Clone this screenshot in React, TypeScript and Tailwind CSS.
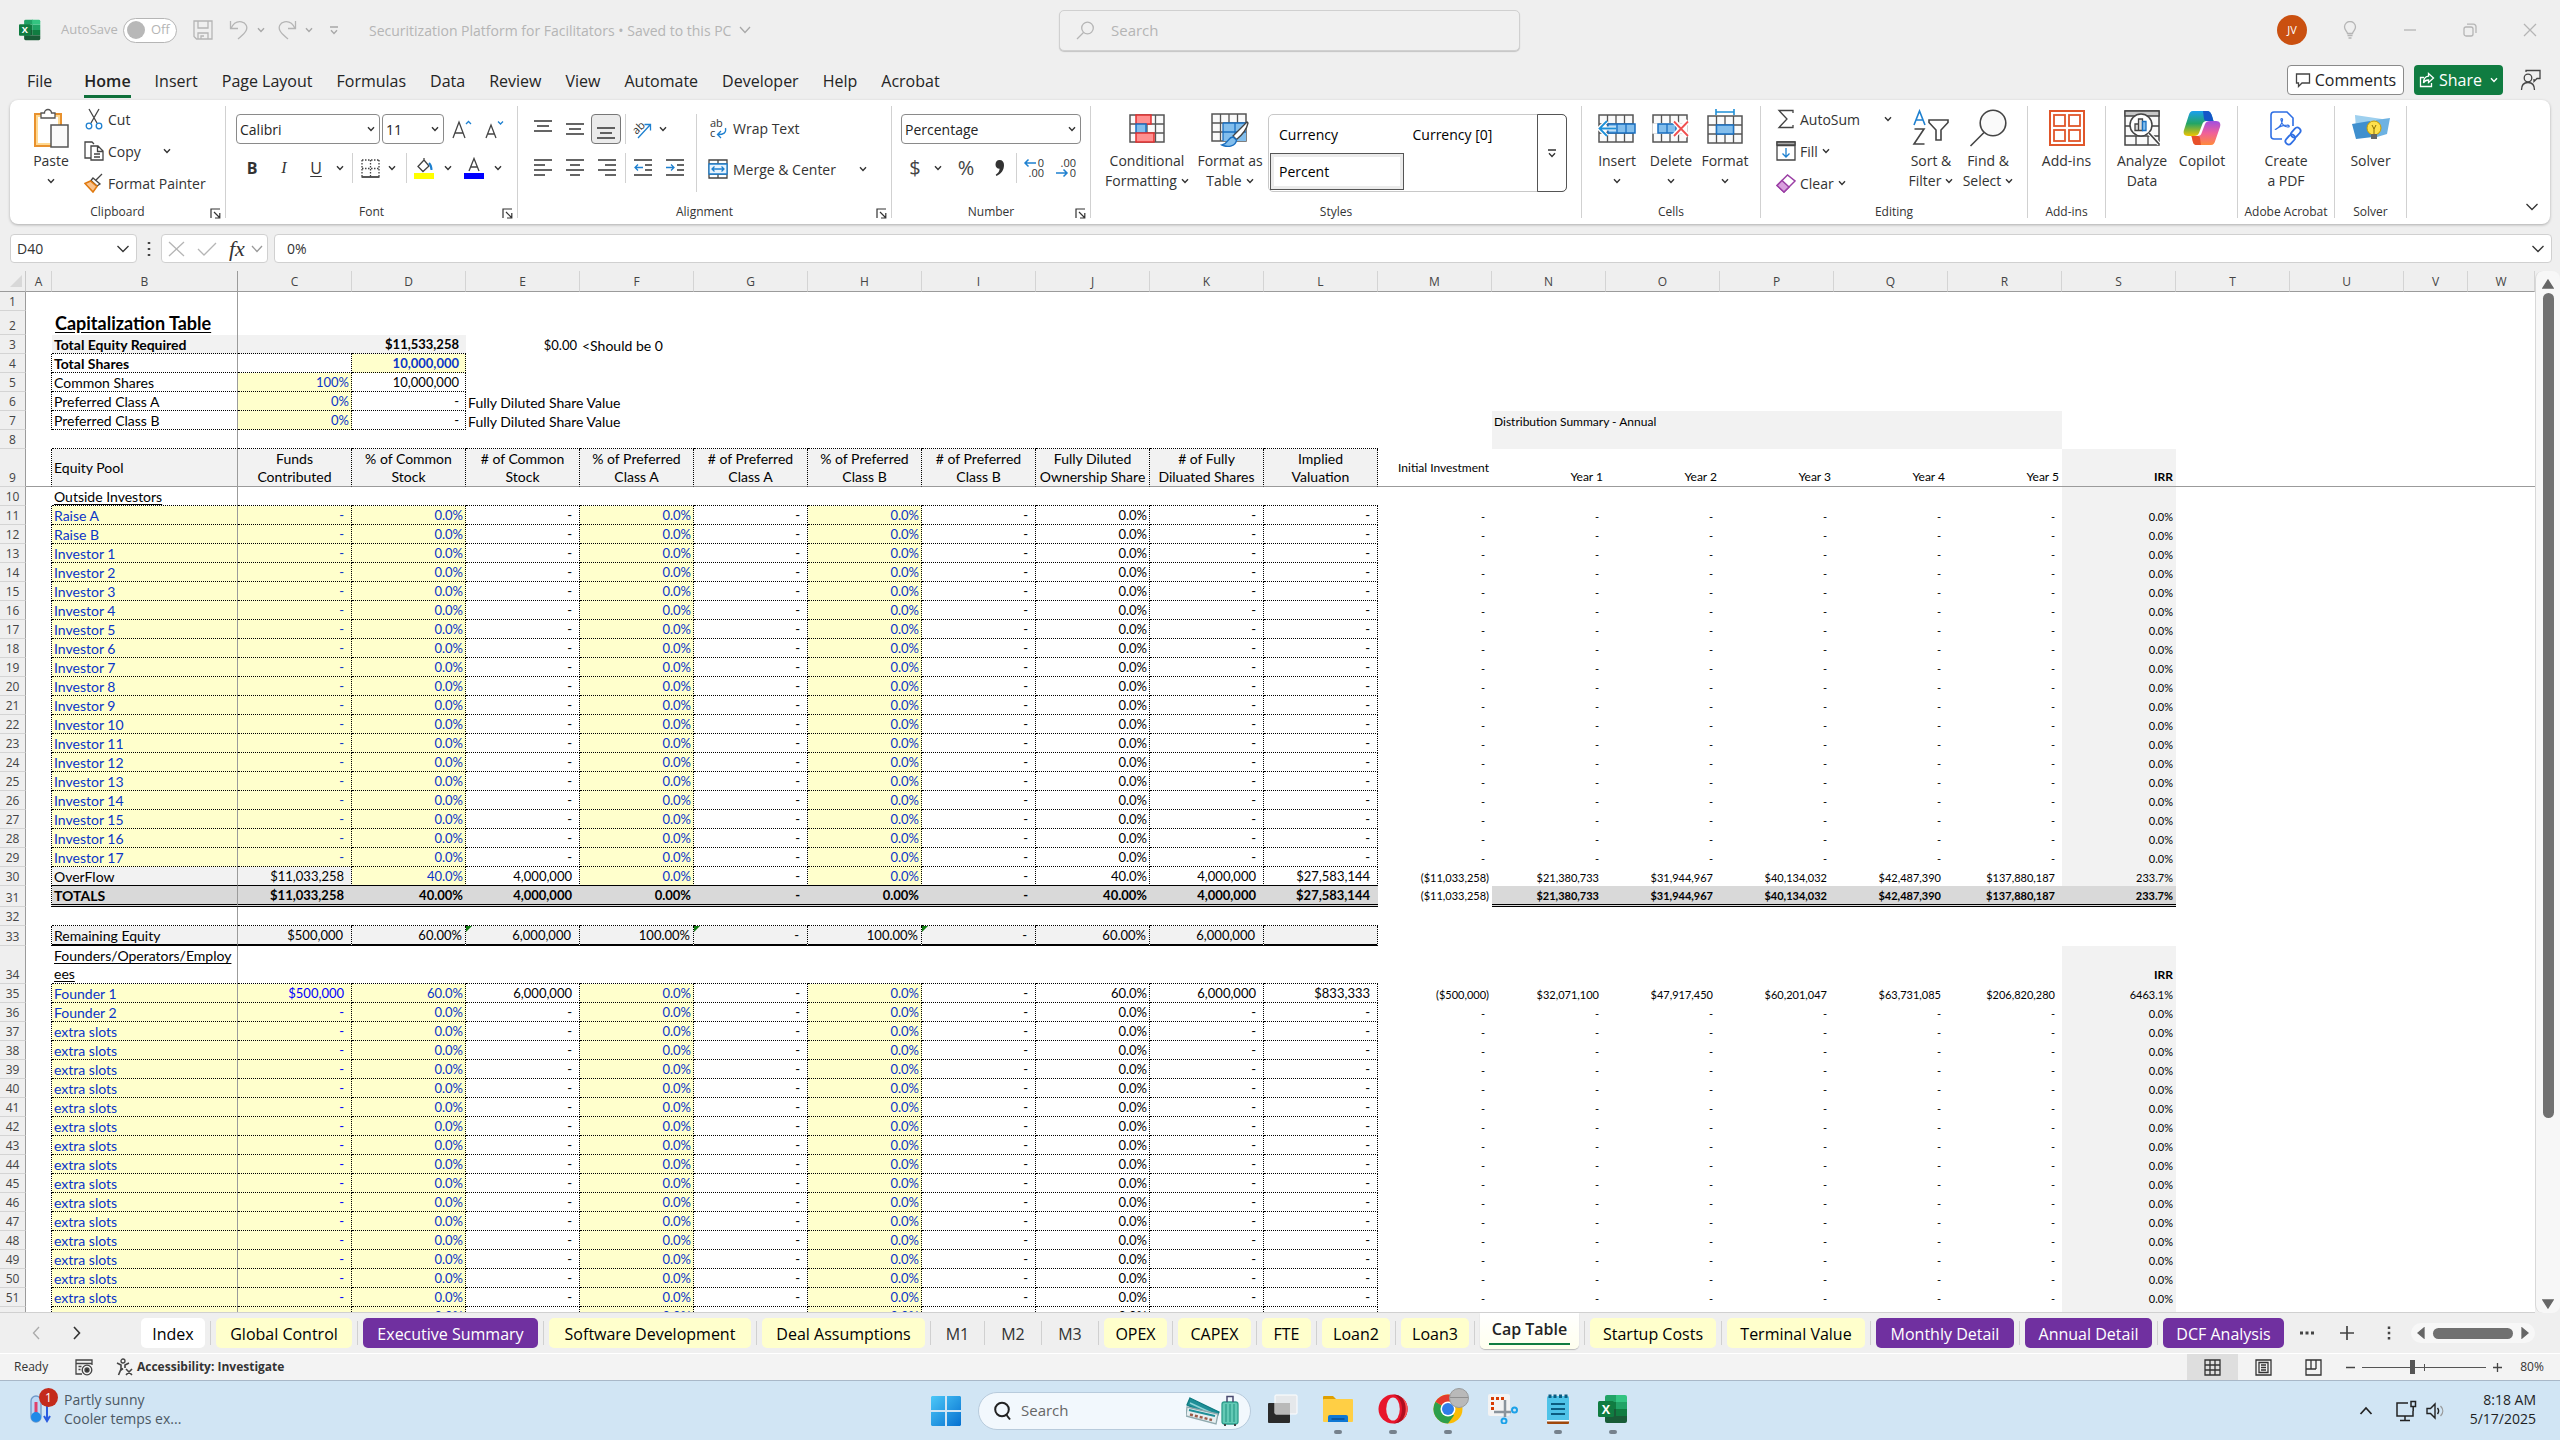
import { ReactNode } from 'react';

interface IconProps {
  children: ReactNode;
  w?: number;
  h?: number;
  box?: string;
  className?: string;
}

interface Cell {
  text?: ReactNode;
  className: string;
  flag?: boolean;
}

interface SheetTab {
  name: string;
  width: string;
  tone: 'white' | 'yellow' | 'purple' | 'plain' | 'active';
}

const Icon = ({ children, w = 20, h = 20, box, className = '' }: IconProps): React.JSX.Element => (
  <svg
    width={w}
    height={h}
    viewBox={box ?? `0 0 ${w} ${h}`}
    fill="none"
    stroke="#444"
    strokeWidth="1.3"
    aria-hidden="true"
    className={`shrink-0 ${className}`}
  >
    {children}
  </svg>
);

const Chevron = ({ className = 'text-[#333]' }: { className?: string }): React.JSX.Element => (
  <Icon w={8} h={6} className={className}>
    <path d="M1 1.2 4 4.4 7 1.2" stroke="currentColor" strokeWidth="1.4" />
  </Icon>
);

const BigChevron = ({ className = 'text-[#333]' }: { className?: string }): React.JSX.Element => (
  <Icon w={14} h={8} className={className}>
    <path d="M1.5 1 7 6.5 12.5 1" stroke="currentColor" />
  </Icon>
);

/* ---------- title bar ---------- */

const ExcelLogo = ({ size }: { size: number }): React.JSX.Element => (
  <svg width={size} height={size} viewBox="0 0 30 30" aria-hidden="true" className="shrink-0">
    <path d="M9 1h10v7H7V3a2 2 0 0 1 2-2z" fill="#21a366" />
    <path d="M18 1h9a2 2 0 0 1 2 2v5H18z" fill="#33c481" />
    <path d="M7 8h11v7H7z" fill="#107c41" />
    <path d="M18 8h11v7H18z" fill="#21a366" />
    <path d="M7 15h11v7H7z" fill="#185c37" />
    <path d="M18 15h11v7H18z" fill="#107c41" />
    <path d="M7 22h22v5a2 2 0 0 1-2 2H9a2 2 0 0 1-2-2z" fill="#185c37" />
    <rect x="0" y="7" width="16" height="16" rx="1.5" fill="#107c41" />
    <text x="8" y="19.5" textAnchor="middle" fontFamily="Open Sans" fontWeight="700" fontSize="12.5" fill="#fff">
      X
    </text>
  </svg>
);

const TitleBar = (): React.JSX.Element => (
  <header className="flex h-[60px] shrink-0 items-center pl-[19px] text-[13px] text-[#b5b5b5]">
    <div className="flex flex-1 items-center pr-[23px]">
      <ExcelLogo size={22} />
      <label htmlFor="autosave" className="ml-5 w-[62px]">
        AutoSave
      </label>
      <button
        id="autosave"
        role="switch"
        aria-checked="false"
        className="flex h-[25px] w-[54px] items-center gap-1.5 rounded-full border border-[#b5b5b5] bg-white pl-[3px]"
      >
        <span className="h-[18px] w-[18px] rounded-full bg-[#b8b8b8]" />
        Off
      </button>
      <button aria-label="Save" className="ml-4">
        <Icon w={20} h={20}>
          <path d="M1 1h18v18H3.5L1 16.5zM5 1v7h10V1M5 19v-6h10v6M8 19v-3h3" stroke="#b5b5b5" />
        </Icon>
      </button>
      <button aria-label="Undo" className="ml-4 flex items-center gap-2 text-[#b5b5b5]">
        <Icon w={20} h={20}>
          <path d="M1.5 1v7.500H9M2 8.500C4 4 8 1 12.500 1.800c4.500 1 6.500 5.200 4.500 9-1.500 3-5 5.500-8 8.200" stroke="#b5b5b5" />
        </Icon>
        <Chevron className="text-[#a8a8a8]" />
      </button>
      <button aria-label="Redo" className="ml-3 flex items-center gap-2 text-[#b5b5b5]">
        <Icon w={20} h={20}>
          <path d="M18.500 1v7.500H11M18 8.500C16 4 12 1 7.500 1.800c-4.500 1-6.500 5.200-4.500 9 1.500 3 5 5.500 8 8.200" stroke="#b5b5b5" />
        </Icon>
        <Chevron className="text-[#a8a8a8]" />
      </button>
      <button aria-label="Customize Quick Access Toolbar" className="ml-4">
        <Icon w={10} h={9}>
          <path d="M1 1h8M2 4.200 5 7.500l3-3.300" stroke="#a8a8a8" />
        </Icon>
      </button>
      <button className="ml-[30px] flex items-center gap-2 text-[14px]">
        Securitization Platform for Facilitators • Saved to this PC
        <Icon w={12} h={8}>
          <path d="M1 1 6 6.500 11 1" stroke="#a8a8a8" />
        </Icon>
      </button>
    </div>
    <div className="flex h-[41px] w-[461px] items-center gap-4 rounded-[5px] border border-[#d0d0d0] bg-[#f0f0f0] pl-4 shadow-[0_1px_1px_#c4c4c4]">
      <Icon w={19} h={19}>
        <circle cx="11.500" cy="7" r="5.800" stroke="#b5b5b5" />
        <path d="M7.500 11.500 1 18" stroke="#b5b5b5" />
      </Icon>
      <input
        aria-label="Search"
        placeholder="Search"
        className="w-80 bg-transparent text-[15px] outline-none placeholder:text-[#b5b5b5]"
      />
    </div>
    <div className="flex flex-1 items-center justify-end pr-[23px]">
      <button className="flex h-[30px] w-[30px] items-center justify-center rounded-full bg-[#ca5010] text-[11px] text-white">
        JV
      </button>
      <button aria-label="Tips" className="ml-[35px]">
        <Icon w={16} h={18}>
          <path d="M5.500 12.500C5 10 2.500 9 2.500 6a5.500 5.500 0 0 1 11 0c0 3-2.500 4-3 6.500zM5.500 14.500h5M6.500 17h3" stroke="#b5b5b5" />
        </Icon>
      </button>
      <button aria-label="Minimize" className="ml-[45px]">
        <Icon w={14} h={14}>
          <path d="M1 7h12" stroke="#b5b5b5" />
        </Icon>
      </button>
      <button aria-label="Restore" className="ml-[46px]">
        <Icon w={14} h={14}>
          <rect x="1" y="4" width="9" height="9" rx="2" stroke="#b5b5b5" />
          <path d="M4 1.200h6.500a2.500 2.500 0 0 1 2.500 2.500V10" stroke="#b5b5b5" />
        </Icon>
      </button>
      <button aria-label="Close" className="ml-[46px]">
        <Icon w={14} h={14}>
          <path d="M1 1l12 12M13 1 1 13" stroke="#b5b5b5" />
        </Icon>
      </button>
    </div>
  </header>
);

/* ---------- ribbon ---------- */

const RIBBON_TABS: string[] = [
  'File',
  'Home',
  'Insert',
  'Page Layout',
  'Formulas',
  'Data',
  'Review',
  'View',
  'Automate',
  'Developer',
  'Help',
  'Acrobat',
];

const RibbonTabs = (): React.JSX.Element => (
  <nav className="flex h-10 shrink-0 items-center pr-[18px] pl-[15px]">
    <div className="flex flex-1 pt-0.5 text-[16px] text-[#242424]">
      {RIBBON_TABS.map(
        (tab: string): React.JSX.Element => (
          <button key={tab} className={tab === 'File' ? 'mr-2 px-3' : 'px-3'}>
            {tab === 'Home' ? (
              <span className="block border-b-[3px] border-[#0f703b] pt-[3px] leading-7 font-semibold">{tab}</span>
            ) : (
              tab
            )}
          </button>
        )
      )}
    </div>
    <button className="flex h-[30px] w-[117px] items-center justify-center gap-1 rounded-[4px] border border-[#8a8a8a] bg-white text-[16px] text-[#242424]">
      <Icon w={16} h={16}>
        <path d="M1.500 2h13v9H7l-3.500 3.500V11h-2z" />
      </Icon>
      Comments
    </button>
    <button className="ml-[10px] flex h-[30px] w-[89px] items-center justify-center gap-1 rounded-[4px] bg-[#107c41] text-[16px] text-white">
      <Icon w={16} h={16}>
        <path d="M5 5.500H1.500v9h11V11M9.500 1.500l5 4.500-5 4.500V8C7 8 5.500 8.800 4.500 11c0-4 2-6.500 5-6.800z" stroke="#fff" />
      </Icon>
      Share
      <Chevron className="ml-1 text-white" />
    </button>
    <button aria-label="Present in Teams" className="ml-[17px]">
      <Icon w={22} h={22}>
        <circle cx="8" cy="9" r="3.800" />
        <path d="M1.500 21c0-5 2.500-7.500 6.500-7.500s6.500 2.500 6.500 7.500M6 3V1.500h14v8h-3l-3 3v-2.500" />
      </Icon>
    </button>
  </nav>
);

interface GroupProps {
  width: string;
  label?: string;
  launcher?: boolean;
  children: ReactNode;
}

const Group = ({ width, label, launcher, children }: GroupProps): React.JSX.Element => (
  <section className={`flex shrink-0 ${width}`}>
    <div className="flex min-w-0 flex-1 flex-col pt-[3px] pb-[5px]">
      <div className="flex min-h-0 flex-1">{children}</div>
      <div className="relative text-center text-[12px] leading-[14px] whitespace-nowrap text-[#333]">
        {label}
        {launcher && (
          <button aria-label={`${label} settings`} className="absolute right-1 bottom-0">
            <Icon w={11} h={11}>
              <path d="M1 10V1h9M4 4l5.500 5.500M9.800 5v5H5" strokeWidth="1.200" stroke="#333" />
            </Icon>
          </button>
        )}
      </div>
    </div>
    <div className="my-1.5 w-px bg-[#d1d1d1]" />
  </section>
);

interface BigButtonProps {
  width: string;
  icon: ReactNode;
  lines: ReactNode[];
}

const BigButton = ({ width, icon, lines }: BigButtonProps): React.JSX.Element => (
  <button className={`flex shrink-0 flex-col items-center pt-[7px] text-[14px] leading-5 text-[#333] ${width}`}>
    <span className="mb-[5px] flex h-9 items-center">{icon}</span>
    {lines.map(
      (line: ReactNode, i: number): React.JSX.Element => (
        <span key={i} className="flex h-5 items-center justify-center gap-1 whitespace-nowrap">
          {line}
        </span>
      )
    )}
  </button>
);

const Slot = ({ width, label, children }: { width: string; label: string; children: ReactNode }): React.JSX.Element => (
  <button aria-label={label} className={`flex h-[30px] shrink-0 items-center justify-center ${width}`}>
    {children}
  </button>
);

const Rule = ({ width }: { width: string }): React.JSX.Element => (
  <span className={`flex h-[30px] shrink-0 justify-center ${width}`}>
    <span className="w-px bg-[#d1d1d1]" />
  </span>
);

const Combo = ({ width, label, value }: { width: string; label: string; value: string }): React.JSX.Element => (
  <span className={`relative flex shrink-0 ${width}`}>
    <select
      aria-label={label}
      defaultValue={value}
      className="h-[30px] w-full appearance-none rounded-[4px] border border-[#8a8a8a] bg-white pl-[3px] text-[14px] text-[#242424]"
    >
      <option>{value}</option>
    </select>
    <span className="pointer-events-none absolute top-3 right-[5px]">
      <Chevron />
    </span>
  </span>
);

const Lines = ({ rows, y }: { rows: [number, number][]; y: number }): React.JSX.Element => (
  <Icon w={18} h={20}>
    <path d={rows.map(([a, b], i): string => `M${a} ${y + i * 5}H${b}`).join('')} stroke="#333" />
  </Icon>
);

const GridBase = (): React.JSX.Element => (
  <>
    <rect x="1" y="5" width="34" height="27" fill="#fafafa" stroke="#555" strokeWidth="1.500" />
    <path d="M1 14h34M1 23h34M9.500 5v27M18 5v27M26.500 5v27" stroke="#555" />
  </>
);

const ConditionalIcon = (): React.JSX.Element => (
  <Icon w={36} h={36}>
    <GridBase />
    <rect x="7" y="5" width="15" height="9" fill="#ff9090" stroke="#e03030" strokeWidth="1.500" />
    <rect x="7" y="14" width="10" height="9" fill="#83beec" stroke="#1a6fc0" strokeWidth="1.500" />
    <rect x="7" y="23" width="18" height="9" fill="#ff9090" stroke="#e03030" strokeWidth="1.500" />
  </Icon>
);

const FormatTableIcon = (): React.JSX.Element => (
  <Icon w={38} h={38}>
    <GridBase />
    <path d="M12 14h23v18H12z" fill="#83beec" stroke="none" />
    <path d="M12 14h23M12 23h23M12 14v18M24 14v18" stroke="#1a6fc0" />
    <path d="M36 13 22 27l3.500 3.500C31 26 36 19 37 14z" fill="#fff" stroke="#444" />
    <path d="M22 28c-5 0-4 6-11 8 6 3 14 1 14.500-5z" fill="#83beec" stroke="#1a6fc0" strokeWidth="1.500" />
  </Icon>
);

const InsertIcon = (): React.JSX.Element => (
  <Icon w={38} h={36}>
    <GridBase />
    <path d="M10 14h27v9H10z" fill="#83beec" stroke="#1a6fc0" strokeWidth="1.500" />
    <path d="M19 14v9M28 14v9" stroke="#1a6fc0" />
    <path d="M18 18.500H1M9 11l-8 7.500L9 26" stroke="#fff" strokeWidth="4" />
    <path d="M18 18.500H1.500M9 11l-7.500 7.500L9 26" stroke="#1e90d8" strokeWidth="1.800" />
  </Icon>
);

const DeleteIcon = (): React.JSX.Element => (
  <Icon w={38} h={36}>
    <GridBase />
    <path d="M1 14h34v9H1z" fill="#fff" stroke="#fff" />
    <path d="M6 14h18v9H6z" fill="#83beec" stroke="#1a6fc0" strokeWidth="1.500" />
    <path d="M15 14v9" stroke="#1a6fc0" />
    <path d="M22 11l14 15M36 11 22 26" stroke="#fff" strokeWidth="5" />
    <path d="M22 11.500l14 14.500M36 11.500 22 26" stroke="#f05050" strokeWidth="1.800" />
  </Icon>
);

const FormatIcon = (): React.JSX.Element => (
  <Icon w={36} h={38}>
    <g transform="translate(0 2)">
      <GridBase />
      <path d="M9.500 14h17v9h-17z" fill="#83beec" stroke="#1a6fc0" strokeWidth="1.500" />
    </g>
    <path d="M9 3h18M9 0v6M27 0v6" stroke="#1e90d8" strokeWidth="1.600" />
  </Icon>
);

const ClipboardGroup = (): React.JSX.Element => (
  <Group width="w-[216px]" label="Clipboard" launcher>
    <BigButton
      width="ml-3 w-[58px]"
      icon={
        <Icon w={36} h={40}>
          <path d="M2 6h26v32H2z" fill="#fff" stroke="#e8912d" strokeWidth="2" />
          <path d="M4 8h22v28H4z" fill="none" stroke="#ffd890" strokeWidth="2" />
          <path d="M8 10V5h3.500a3.500 3.500 0 0 1 7 0H22v5z" fill="#fff" stroke="#555" />
          <path d="M18 17h17v22H18z" fill="#fafafa" stroke="#555" strokeWidth="1.500" />
        </Icon>
      }
      lines={[<>Paste</>, <Chevron />]}
    />
    <div className="ml-1 flex flex-col text-[14px] text-[#333]">
      <button className="flex h-8 items-center gap-1">
        <Icon w={20} h={22}>
          <path d="M5 1l8 14M15 1 7 15" />
          <circle cx="5" cy="18" r="2.800" stroke="#1e80d0" />
          <circle cx="15" cy="18" r="2.800" stroke="#1e80d0" />
        </Icon>
        Cut
      </button>
      <button className="flex h-8 items-center gap-1">
        <Icon w={20} h={20}>
          <path d="M7 17H1V1h7l2 2M7 5h7l5 5v9H7zM13.500 5v5.500H19M10 13h6M10 16h6" />
        </Icon>
        Copy
        <span className="ml-[18px]">
          <Chevron />
        </span>
      </button>
      <button className="flex h-8 items-center gap-1">
        <Icon w={20} h={20}>
          <path d="M18 1l-6 6M9 5l7 6-3 2-6-5.500z" fill="#fff" />
          <path d="M6.500 8 1 10.500 9 19l4-5.500z" fill="#fbc28a" stroke="#e07a10" strokeWidth="1.600" />
        </Icon>
        Format Painter
      </button>
    </div>
  </Group>
);

const FontGroup = (): React.JSX.Element => (
  <Group width="w-[292px]" label="Font" launcher>
    <div className="flex flex-col gap-[9px] pt-[11px] pl-[10px]">
      <div className="flex">
        <Combo width="w-[144px]" label="Font name" value="Calibri" />
        <Combo width="ml-0.5 w-[62px]" label="Font size" value="11" />
        <Slot width="ml-0.5 w-8" label="Increase font size">
          <Icon w={20} h={22}>
            <path d="M1 20 7 4l6 16M3 15h8" />
            <path d="M14 6l2.500-2.500L19 6" stroke="#1e80d0" />
          </Icon>
        </Slot>
        <Slot width="w-8" label="Decrease font size">
          <Icon w={20} h={22}>
            <path d="M2 20 7 7l5 13M4 16h6" />
            <path d="M14 3.500 16.500 6 19 3.500" stroke="#1e80d0" />
          </Icon>
        </Slot>
      </div>
      <div className="flex text-[16px] text-[#333]">
        <Slot width="w-8" label="Bold">
          <b>B</b>
        </Slot>
        <Slot width="w-8" label="Italic">
          <i className="font-['Liberation_Serif',serif]">I</i>
        </Slot>
        <Slot width="w-8" label="Underline">
          <u className="underline-offset-2">U</u>
        </Slot>
        <Slot width="w-4" label="Underline styles">
          <Chevron />
        </Slot>
        <Rule width="w-2" />
        <Slot width="w-7" label="Borders">
          <Icon w={19} h={19}>
            <path d="M1 1h17M1 9.500h17M1 1v17M9.500 1v17M18 1v17" strokeDasharray="1.500 1.500" />
            <path d="M.5 18h18" strokeWidth="1.800" />
          </Icon>
        </Slot>
        <Slot width="w-4" label="Border styles">
          <Chevron />
        </Slot>
        <Rule width="w-3" />
        <Slot width="w-6" label="Fill color">
          <Icon w={20} h={22}>
            <path d="M4 9.500 10 3l5 6-6 5.500zM10 3V1" />
            <path d="M15 6c2 2 2.500 4 2.500 7" stroke="#1e80d0" strokeWidth="2" />
            <path d="M0 16h20v6H0z" fill="#ffff00" stroke="none" />
          </Icon>
        </Slot>
        <Slot width="w-6" label="Fill colors">
          <Chevron />
        </Slot>
        <Slot width="w-7" label="Font color">
          <Icon w={20} h={22}>
            <path d="M5 14 10 1.500 15 14M6.500 10h7" />
            <path d="M0 16h20v6H0z" fill="#0000ff" stroke="none" />
          </Icon>
        </Slot>
        <Slot width="w-5" label="Font colors">
          <Chevron />
        </Slot>
      </div>
    </div>
  </Group>
);

const AlignmentGroup = (): React.JSX.Element => (
  <Group width="w-[374px]" label="Alignment" launcher>
    <div className="flex flex-col gap-[9px] pt-[11px] pl-[9px]">
      <div className="flex">
        <Slot width="w-8" label="Top align">
          <Lines rows={[[0, 18], [3, 15], [0, 18]]} y={2} />
        </Slot>
        <Slot width="w-8" label="Middle align">
          <Lines rows={[[0, 18], [3, 15], [0, 18]]} y={5} />
        </Slot>
        <button
          aria-label="Bottom align"
          className="flex h-[30px] w-[30px] items-center justify-center rounded-[4px] border border-[#777] bg-[#ebebeb]"
        >
          <Lines rows={[[0, 18], [3, 15], [0, 18]]} y={9} />
        </button>
        <Rule width="ml-0.5 w-1" />
        <Slot width="w-7" label="Orientation">
          <Icon w={22} h={22} className="overflow-visible">
            <text x="2" y="14" transform="rotate(-45 8 10)" fontSize="11" fill="#333" stroke="none" fontFamily="Open Sans">
              ab
            </text>
            <path d="M8 20 20 7M14.500 6.500H20.500V12.500" stroke="#1e80d0" />
          </Icon>
        </Slot>
        <Slot width="w-4" label="Orientation options">
          <Chevron />
        </Slot>
      </div>
      <div className="flex">
        <Slot width="w-8" label="Align left">
          <Icon w={18} h={20}>
            <path d="M0 2h18M0 7h11M0 12h18M0 17h11" stroke="#333" />
          </Icon>
        </Slot>
        <Slot width="w-8" label="Center">
          <Icon w={18} h={20}>
            <path d="M0 2h18M4 7h10M0 12h18M4 17h10" stroke="#333" />
          </Icon>
        </Slot>
        <Slot width="w-8" label="Align right">
          <Icon w={18} h={20}>
            <path d="M0 2h18M7 7h11M0 12h18M7 17h11" stroke="#333" />
          </Icon>
        </Slot>
        <Rule width="w-1" />
        <Slot width="w-8" label="Decrease indent">
          <Icon w={18} h={20}>
            <path d="M0 2h18M11 7h7M11 12h7M0 17h18" stroke="#333" />
            <path d="M9 9.500H1M4 6.500 1 9.500l3 3" stroke="#1e80d0" />
          </Icon>
        </Slot>
        <Slot width="w-8" label="Increase indent">
          <Icon w={18} h={20}>
            <path d="M0 2h18M11 7h7M11 12h7M0 17h18" stroke="#333" />
            <path d="M0 9.500h8M5 6.500l3 3-3 3" stroke="#1e80d0" />
          </Icon>
        </Slot>
      </div>
    </div>
    <div className="mt-[11px] ml-[5px] h-[78px] w-px bg-[#d1d1d1]" />
    <div className="flex flex-col gap-[11px] pt-[10px] pl-[11px] text-[14px] text-[#333]">
      <button className="flex h-[30px] items-center gap-[5px]">
        <Icon w={20} h={24} className="overflow-visible">
          <text x="2" y="11" fontSize="11" fill="#333" stroke="none" fontFamily="Open Sans">
            ab
          </text>
          <text x="2" y="21" fontSize="11" fill="#333" stroke="none" fontFamily="Open Sans">
            c
          </text>
          <path d="M17.500 12c1 5-2 6.500-7.500 6.500M13 15l-3.500 3.500L13 22" stroke="#1e80d0" />
        </Icon>
        Wrap Text
      </button>
      <button className="flex h-[30px] items-center gap-[5px]">
        <Icon w={20} h={20}>
          <path d="M1 1h18v18H1zM1 5h18M1 15h18M10 1v4M10 15v4" />
          <path d="M1 5h18v10H1z" fill="#e8f3fc" stroke="#1e80d0" />
          <path d="M4 10h12M6.500 7.500 4 10l2.500 2.500M13.500 7.500 16 10l-2.500 2.500" stroke="#1e80d0" />
        </Icon>
        Merge &amp; Center
        <span className="ml-[18px]">
          <Chevron />
        </span>
      </button>
    </div>
  </Group>
);

const Decimals = ({ top, bottom, arrow }: { top: string; bottom: string; arrow: string }): React.JSX.Element => (
  <Icon w={22} h={24}>
    <text x="21" y="11" textAnchor="end" fontSize="11" fill="#333" stroke="none" fontFamily="Open Sans">
      {top}
    </text>
    <text x="21" y="21" textAnchor="end" fontSize="11" fill="#333" stroke="none" fontFamily="Open Sans">
      {bottom}
    </text>
    <path d={arrow} stroke="#1e80d0" strokeWidth="1.500" />
  </Icon>
);

const NumberGroup = (): React.JSX.Element => (
  <Group width="w-[199px]" label="Number" launcher>
    <div className="flex flex-col gap-[9px] pt-[11px]">
      <Combo width="ml-[9px] w-[180px]" label="Number format" value="Percentage" />
      <div className="flex pl-2 text-[20px] text-[#444]">
        <Slot width="w-[30px]" label="Accounting format">
          $
        </Slot>
        <Slot width="w-4" label="Accounting formats">
          <Chevron />
        </Slot>
        <Slot width="w-10" label="Percent style">
          %
        </Slot>
        <Slot width="w-7" label="Comma style">
          <Icon w={12} h={18}>
            <path d="M5.500 1C8.500 1 10 3 10 6c0 5-2.500 8.500-7.500 11l-.8-1.200C4.500 14 5.500 12 5.600 9.800 3 9.800 1.500 8 1.500 5.500 1.500 2.800 3 1 5.500 1z" fill="#333" stroke="none" />
          </Icon>
        </Slot>
        <Rule width="w-1" />
        <Slot width="w-8" label="Increase decimal">
          <Decimals top="0" bottom=".00" arrow="M13 7H2M5.500 3.500 2 7l3.500 3.500" />
        </Slot>
        <Slot width="w-8" label="Decrease decimal">
          <Decimals top=".00" bottom="0" arrow="M1 17h11M8.500 13.500 12 17l-3.500 3.500" />
        </Slot>
      </div>
    </div>
  </Group>
);

const StylesGroup = (): React.JSX.Element => (
  <Group width="w-[491px]" label="Styles">
    <BigButton
      width="ml-2 w-24"
      icon={<ConditionalIcon />}
      lines={[
        <>Conditional</>,
        <>
          Formatting <Chevron />
        </>,
      ]}
    />
    <BigButton
      width="w-[70px]"
      icon={<FormatTableIcon />}
      lines={[
        <>Format as</>,
        <>
          Table <Chevron />
        </>,
      ]}
    />
    <div className="mt-[11px] ml-[3px] flex h-[78px] w-[299px] rounded-[5px] border border-[#c8c8c8] text-left text-[14px] text-black">
      <div className="grid flex-1 grid-cols-2 grid-rows-2 p-px">
        <button className="pl-[9px] text-left">Currency</button>
        <button className="pl-[9px] text-left">Currency [0]</button>
        <button className="border border-[#555] bg-white pl-2 text-left shadow-[inset_0_0_0_3px_#ebebeb]">Percent</button>
      </div>
      <button
        aria-label="More styles"
        className="-m-px flex w-[30px] items-center justify-center rounded-r-[5px] border border-[#555]"
      >
        <Icon w={10} h={9}>
          <path d="M1 1h8M2 4.200 5 7.500l3-3.300" stroke="#333" />
        </Icon>
      </button>
    </div>
  </Group>
);

const CellsGroup = (): React.JSX.Element => (
  <Group width="w-[179px]" label="Cells">
    <BigButton width="ml-2 w-[54px]" icon={<InsertIcon />} lines={[<>Insert</>, <Chevron />]} />
    <BigButton width="w-[54px]" icon={<DeleteIcon />} lines={[<>Delete</>, <Chevron />]} />
    <BigButton width="w-[54px]" icon={<FormatIcon />} lines={[<>Format</>, <Chevron />]} />
  </Group>
);

const EditingGroup = (): React.JSX.Element => (
  <Group width="w-[267px]" label="Editing">
    <div className="flex w-[142px] flex-col pl-[15px] text-[14px] text-[#333]">
      <button className="flex h-8 items-center gap-1">
        <Icon w={20} h={20}>
          <path d="M17 4V1.500H3l8 8.500-8 8.500h14V16" />
        </Icon>
        AutoSum
        <span className="ml-5">
          <Chevron />
        </span>
      </button>
      <button className="flex h-8 items-center gap-1">
        <Icon w={20} h={20}>
          <path d="M1 1h18v18H1zM1 4.500h18" />
          <path d="M1 1h18v3H1z" fill="#aaa" />
          <path d="M10 7v9M6.500 12.500 10 16l3.500-3.500" stroke="#1e80d0" />
        </Icon>
        Fill <Chevron />
      </button>
      <button className="flex h-8 items-center gap-1">
        <Icon w={20} h={20}>
          <path d="M1 12.500 11.500 2 19 8 8 19z" fill="#fff" stroke="#9b3fa5" strokeWidth="1.500" />
          <path d="M1 12.500 6 7.500l7 6.500-5 5z" fill="#d8a0dd" stroke="#9b3fa5" strokeWidth="1.500" />
        </Icon>
        Clear <Chevron />
      </button>
    </div>
    <BigButton
      width="w-14"
      icon={
        <Icon w={38} h={38}>
          <path d="M2 16 7.500 2 13 16M4 11h7" stroke="#1e80d0" strokeWidth="1.600" />
          <path d="M2.500 20H12L2 35h10.500" strokeWidth="1.600" />
          <path d="M17 11h19v2.500l-7 7.500v10h-5V21l-7-7.500z" fill="#fff" strokeWidth="1.600" />
        </Icon>
      }
      lines={[
        <>Sort &amp;</>,
        <>
          Filter <Chevron />
        </>,
      ]}
    />
    <BigButton
      width="w-[58px]"
      icon={
        <Icon w={38} h={38}>
          <circle cx="24" cy="14" r="12.800" fill="#fafafa" strokeWidth="1.600" />
          <path d="M15 23.500 1.500 37" strokeWidth="1.600" />
        </Icon>
      }
      lines={[
        <>Find &amp;</>,
        <>
          Select <Chevron />
        </>,
      ]}
    />
  </Group>
);

const AddinGroups = (): React.JSX.Element => (
  <>
    <Group width="w-[78px]" label="Add-ins">
      <BigButton
        width="w-[77px]"
        icon={
          <Icon w={36} h={36}>
            <g stroke="#e0562a" strokeWidth="1.800">
              <rect x="1" y="1" width="34" height="34" strokeWidth="2" />
              <rect x="5" y="5" width="11" height="11" />
              <rect x="20" y="5" width="11" height="11" />
              <rect x="5" y="20" width="11" height="11" />
              <rect x="20" y="20" width="11" height="11" />
            </g>
          </Icon>
        }
        lines={[<>Add-ins</>]}
      />
    </Group>
    <Group width="w-[132px]">
      <BigButton
        width="ml-1 w-16"
        icon={
          <Icon w={36} h={36}>
            <rect x="1" y="1" width="34" height="34" fill="#fafafa" strokeWidth="1.500" />
            <path d="M1 1h34v5H1z" fill="#c8c8c8" />
            <path d="M1 16h34M1 26h34M12 26v9M24 26v9" />
            <circle cx="17" cy="15" r="11" fill="#fff" strokeWidth="1.500" />
            <path d="M11 14h3.500v6.500H11zM14.500 9h4v11.500h-4z" fill="#ddd" />
            <path d="M18.500 11.500H22v9h-3.500z" fill="#83beec" stroke="#1a6fc0" />
            <path d="M25 23l10 11" stroke="#fff" strokeWidth="4" />
            <path d="M25 23l10 11" strokeWidth="1.800" />
          </Icon>
        }
        lines={[<>Analyze</>, <>Data</>]}
      />
      <BigButton
        width="w-14"
        icon={
          <svg width="38" height="36" viewBox="0 0 38 36" aria-hidden="true">
            <defs>
              <linearGradient id="cpA" x1="0" y1="0" x2="0" y2="1">
                <stop offset="0" stopColor="#1a9ff0" />
                <stop offset=".5" stopColor="#23a566" />
                <stop offset="1" stopColor="#f0c400" />
              </linearGradient>
              <linearGradient id="cpB" x1="0" y1="0" x2="0" y2="1">
                <stop offset="0" stopColor="#a04fe0" />
                <stop offset=".5" stopColor="#f0609a" />
                <stop offset="1" stopColor="#ff8a3c" />
              </linearGradient>
            </defs>
            <path d="M10 1h14c3 0 4 2 5 5l1.500 5H24c-3 0-4 1-5 4l-3 8c-1 2-2 3-5 3H5c-4 0-5-3-4-6L5.500 6C6.500 2.500 7.500 1 10 1z" fill="url(#cpA)" />
            <path d="M20 1h4c3 0 4 2 5 5l1.500 5H24c-1.500 0-2.500-.5-3-2z" fill="#1456c8" />
            <path d="M28 35H14c-3 0-4-2-4.500-5l-1-4H14c3 0 4-1 5-4l3-8c1-2 2-3 5-3h6c4 0 5 3 4 6l-4.500 13c-1 3.500-2 5-4.500 5z" fill="url(#cpB)" />
            <path d="M18 35h-4c-3 0-4-2-4.500-5l-1-4H14c1.500 0 2.500.5 3 2z" fill="#e8502a" />
          </svg>
        }
        lines={[<>Copilot</>]}
      />
    </Group>
    <Group width="w-[97px]" label="Adobe Acrobat">
      <BigButton
        width="w-24"
        icon={
          <Icon w={32} h={36}>
            <g stroke="#2f6fe4" strokeWidth="1.600">
              <path d="M12 29H4a3 3 0 0 1-3-3V5a3 3 0 0 1 3-3h13l6 6v8" />
              <path d="M6 19c3-1 6-5 6.500-9 .3-2-2-2-1.500 0 .8 4 3.500 7 7 7 2 0 1.500-2-1-1.800-4 .2-7.500 1.300-10 3.300-1.500 1.300-2.500.8-1 .5z" strokeWidth="1.200" />
              <g strokeWidth="1.800">
                <rect x="22.500" y="17" width="6.500" height="11" rx="3.200" transform="rotate(42 25.700 22.500)" />
                <rect x="17" y="24" width="6.500" height="11" rx="3.200" transform="rotate(42 20.200 29.500)" />
              </g>
            </g>
          </Icon>
        }
        lines={[<>Create</>, <>a PDF</>]}
      />
    </Group>
    <Group width="w-[72px]" label="Solver">
      <BigButton
        width="w-[71px]"
        icon={
          <svg width="38" height="36" viewBox="0 0 38 36" aria-hidden="true">
            <path d="M3 5l27 4-2 14-24-4z" fill="#9ed0ef" />
            <path d="M38 8 24 10l1 17 10-3z" fill="#6db2e2" />
            <path d="M0 14 18 11l3 16-17 2z" fill="#3f8fce" />
            <circle cx="22" cy="18" r="7" fill="#ffe14d" stroke="#c79a00" />
            <path d="M20 15l2 4 2-4M22 19v5" stroke="#8a6d00" fill="none" />
            <path d="M19 24h6v5h-6z" fill="#666" />
          </svg>
        }
        lines={[<>Solver</>]}
      />
    </Group>
  </>
);

const Ribbon = (): React.JSX.Element => (
  <div className="mx-[10px] flex h-[124px] shrink-0 rounded-lg bg-white shadow-[0_1px_3px_rgba(0,0,0,0.28)]">
    <ClipboardGroup />
    <FontGroup />
    <AlignmentGroup />
    <NumberGroup />
    <StylesGroup />
    <CellsGroup />
    <EditingGroup />
    <AddinGroups />
    <div className="flex flex-1 items-end justify-end pr-[11px] pb-[13px]">
      <button aria-label="Ribbon display options">
        <BigChevron />
      </button>
    </div>
  </div>
);

const FormulaBar = (): React.JSX.Element => (
  <div className="mt-[10px] mb-2 flex h-[29px] shrink-0 items-center pr-[8px] pl-[10px] text-[14px] text-[#333]">
    <div className="flex h-full w-[127px] items-center rounded-[4px] border border-[#d0d0d0] bg-white pr-1.5 pl-1.5">
      <input aria-label="Name box" defaultValue="D40" className="min-w-0 flex-1 bg-transparent outline-none" />
      <BigChevron />
    </div>
    <Icon w={4} h={16} className="mx-[10px]">
      <path d="M2 1v2M2 7v2M2 13v2" strokeWidth="2.500" />
    </Icon>
    <div className="flex h-full w-[107px] items-center gap-3 rounded-[4px] border border-[#d0d0d0] bg-white pl-1.5">
      <button aria-label="Cancel">
        <Icon w={17} h={16}>
          <path d="M1 1l15 14M16 1 1 15" stroke="#b5b5b5" />
        </Icon>
      </button>
      <button aria-label="Enter">
        <Icon w={20} h={14}>
          <path d="M1 7l6 6L19 1" stroke="#b5b5b5" />
        </Icon>
      </button>
      <button
        aria-label="Insert function"
        className="flex items-center gap-1.5 font-['Liberation_Serif',serif] text-[22px] leading-5 italic"
      >
        fx
        <Icon w={12} h={8}>
          <path d="M1 1l5 5.500L11 1" stroke="#999" />
        </Icon>
      </button>
    </div>
    <div className="ml-1.5 flex h-full flex-1 items-center rounded-[4px] border border-[#d0d0d0] bg-white pr-1.5 pl-3">
      <input aria-label="Formula bar" defaultValue="0%" className="min-w-0 flex-1 bg-transparent outline-none" />
      <BigChevron />
    </div>
  </div>
);

/* ---------- worksheet ---------- */

const COLUMNS: string[] = 'ABCDEFGHIJKLMNOPQRSTUVW'.split('');
const POOL_COLUMNS: string[] = 'CDEFGHIJKL'.split('');
const YEAR_COLUMNS: string[] = 'NOPQR'.split('');

const COLUMN_WIDTHS: Record<string, string> = {
  A: 'w-[26px]',
  B: 'w-[186px]',
  V: 'w-[64px]',
  W: 'w-[67px]',
};

const ROW_HEIGHTS: Record<number, string> = {
  2: 'h-6',
  9: 'h-[38px]',
  31: 'h-[21px]',
  33: 'h-5',
  34: 'h-[38px]',
};

const R_DOT = 'border-r [border-right-style:dotted] border-r-black';
const B_DOT = 'border-b [border-bottom-style:dotted] border-b-black';
const B_SOLID = 'border-b border-b-black';
const B_THICK = 'border-b-2 border-b-black';
const B_DOUBLE = 'border-b-3 [border-bottom-style:double] border-b-black';
const B_FREEZE = 'border-b border-b-[#9b9b9b]';
const R_FREEZE = 'border-r border-r-[#9b9b9b]';

const WORDS = 'text-[14px] text-black';
const NUMBERS = 'text-[13px] text-black';
const BLUE = 'text-[#0a35c8]';
const SMALL = 'text-[11px] text-black';
const SMALL_WORDS = 'text-[12px] text-black';
const YELLOW = 'bg-[#ffffcc]';
const GRAY = 'bg-[#f2f2f2]';
const DARK = 'bg-[#d9d9d9]';

const HEADINGS: Record<string, [string, string]> = {
  C: ['Funds', 'Contributed'],
  D: ['% of Common', 'Stock'],
  E: ['# of Common', 'Stock'],
  F: ['% of Preferred', 'Class A'],
  G: ['# of Preferred', 'Class A'],
  H: ['% of Preferred', 'Class B'],
  I: ['# of Preferred', 'Class B'],
  J: ['Fully Diluted', 'Ownership Share'],
  K: ['# of Fully', 'Diluated Shares'],
  L: ['Implied', 'Valuation'],
};

const VALUES: Record<number, Record<string, string>> = {
  30: {
    C: '$11,033,258', D: '40.0%', E: '4,000,000', J: '40.0%', K: '4,000,000', L: '$27,583,144', M: '($11,033,258)',
    N: '$21,380,733', O: '$31,944,967', P: '$40,134,032', Q: '$42,487,390', R: '$137,880,187', S: '233.7%',
  },
  31: {
    C: '$11,033,258', D: '40.00%', E: '4,000,000', F: '0.00%', G: '-', H: '0.00%', I: '-', J: '40.00%',
    K: '4,000,000', L: '$27,583,144', M: '($11,033,258)', N: '$21,380,733', O: '$31,944,967', P: '$40,134,032',
    Q: '$42,487,390', R: '$137,880,187', S: '233.7%',
  },
  33: {
    C: '$500,000', D: '60.00%', E: '6,000,000', F: '100.00%', G: '-', H: '100.00%', I: '-', J: '60.00%',
    K: '6,000,000', L: '',
  },
  35: {
    C: '$500,000', D: '60.0%', E: '6,000,000', J: '60.0%', K: '6,000,000', L: '$833,333', M: '($500,000)',
    N: '$32,071,100', O: '$47,917,450', P: '$60,201,047', Q: '$63,731,085', R: '$206,820,280', S: '6463.1%',
  },
};

const isPercent = (col: string): boolean => 'DFHJS'.includes(col);

const valueAt = (row: number, col: string): string => VALUES[row]?.[col] ?? (isPercent(col) ? '0.0%' : '-');

const nameAt = (row: number): string => {
  if (row <= 12) return row === 11 ? 'Raise A' : 'Raise B';
  if (row <= 29) return `Investor ${row - 12}`;
  if (row === 30) return 'OverFlow';
  return row <= 36 ? `Founder ${row - 34}` : 'extra slots';
};

const poolRow = (row: number): Record<string, Cell> => {
  const line: string = row === 30 ? B_SOLID : B_DOT;
  const cells: Record<string, Cell> = {
    A: { className: R_DOT },
    B: {
      text: nameAt(row),
      className: `${line} pl-0.5 ${row === 30 ? `${WORDS} ${GRAY}` : `text-[14px] ${BLUE} ${YELLOW}`}`,
    },
  };
  POOL_COLUMNS.forEach((col: string): void => {
    let tone: string = NUMBERS;
    if ('CDFH'.includes(col)) tone = `text-[13px] ${BLUE} ${YELLOW}`;
    if (col === 'C' && row === 30) tone = `${NUMBERS} ${GRAY}`;
    if (col === 'C' && row > 34) tone = `text-[13px] text-[#0000ff] ${YELLOW}`;
    cells[col] = {
      text: valueAt(row, col),
      className: `${tone} ${line} ${R_DOT} text-right ${isPercent(col) ? 'pr-0.5' : 'pr-[7px]'}`,
    };
  });
  ['M', ...YEAR_COLUMNS].forEach((col: string): void => {
    const text: string = valueAt(row, col);
    cells[col] = { text, className: `${SMALL} text-right ${text.startsWith('(') ? 'pr-[3px]' : 'pr-[7px]'}` };
  });
  cells.S = { text: valueAt(row, 'S'), className: `${SMALL} ${GRAY} pr-[3px] text-right` };
  return cells;
};

const headingRow = (): Record<string, Cell> => {
  const cells: Record<string, Cell> = {
    A: { className: `${B_FREEZE} ${R_DOT}` },
    B: { text: 'Equity Pool', className: `${WORDS} ${GRAY} ${B_FREEZE} pl-0.5` },
    M: { text: 'Initial Investment', className: `${SMALL_WORDS} ${B_FREEZE} pr-[3px] text-right` },
    S: { text: 'IRR', className: `${SMALL_WORDS} ${GRAY} ${B_FREEZE} pr-[3px] text-right font-bold` },
  };
  POOL_COLUMNS.forEach((col: string): void => {
    const [first, second] = HEADINGS[col];
    cells[col] = {
      text: (
        <>
          {first}
          <br />
          {second}
        </>
      ),
      className: `${WORDS} ${GRAY} ${B_FREEZE} ${R_DOT} px-0 text-center`,
    };
  });
  YEAR_COLUMNS.forEach((col: string, i: number): void => {
    cells[col] = { text: `Year ${i + 1}`, className: `${SMALL_WORDS} ${B_FREEZE} pr-[3px] text-right` };
  });
  'TUVW'.split('').forEach((col: string): void => {
    cells[col] = { className: B_FREEZE };
  });
  return cells;
};

const totalsRow = (row: number): Record<string, Cell> => {
  const isTotals: boolean = row === 31;
  const base: string = isTotals ? `font-bold text-black ${DARK} ${B_DOUBLE}` : `text-black ${GRAY} ${B_THICK}`;
  const cells: Record<string, Cell> = {
    A: { className: R_DOT },
    B: { text: isTotals ? 'TOTALS' : 'Remaining Equity', className: `text-[14px] ${base} pl-0.5` },
  };
  POOL_COLUMNS.forEach((col: string): void => {
    cells[col] = {
      text: valueAt(row, col),
      className: `text-[13px] ${base} ${isTotals ? '' : R_DOT} text-right ${isPercent(col) ? 'pr-[3px]' : 'pr-2'}`,
      flag: !isTotals && 'EGI'.includes(col),
    };
  });
  if (isTotals) {
    cells.M = { text: valueAt(row, 'M'), className: `${SMALL} pr-[3px] pb-[3px] text-right` };
    YEAR_COLUMNS.forEach((col: string): void => {
      cells[col] = {
        text: valueAt(row, col),
        className: `${SMALL} ${DARK} ${B_DOUBLE} pr-[7px] text-right font-bold`,
      };
    });
    cells.S = { text: valueAt(row, 'S'), className: `${SMALL} ${DARK} ${B_DOUBLE} pr-[3px] text-right font-bold` };
  }
  return cells;
};

const bottomLine = (): Record<string, Cell> =>
  Object.fromEntries(['B', ...POOL_COLUMNS].map((col: string): [string, Cell] => [col, { className: B_DOT }]));

const cellsFor = (row: number): Record<string, Cell> => {
  const label = (text: string, c: string, d: string, cTone: string, dTone: string): Record<string, Cell> => ({
    A: { className: R_DOT },
    B: { text, className: `${WORDS} ${row === 4 ? 'font-bold' : ''} ${B_DOT} pl-0.5` },
    C: { text: c, className: `text-[13px] ${cTone} ${B_DOT} ${R_DOT} pr-0.5 text-right` },
    D: { text: d, className: `text-[13px] ${dTone} ${B_DOT} ${R_DOT} pr-1.5 text-right` },
  });
  switch (row) {
    case 2:
      return {
        B: {
          text: <u className="underline-offset-2">Capitalization Table</u>,
          className: 'pb-[3px] pl-[3px] text-[18px] font-bold text-black',
        },
      };
    case 3:
      return {
        B: { text: 'Total Equity Required', className: `${WORDS} ${GRAY} ${B_DOT} pl-0.5 font-bold` },
        C: { className: `${GRAY} ${B_DOT}` },
        D: { text: '$11,533,258', className: `${NUMBERS} ${GRAY} ${B_DOT} pr-[7px] text-right font-bold` },
        E: { text: '$0.00', className: `${NUMBERS} pr-[3px] text-right` },
        F: { text: '<Should be 0', className: `${WORDS} pl-0.5` },
      };
    case 4:
      return label('Total Shares', '', '10,000,000', '', `font-bold ${BLUE} ${YELLOW}`);
    case 5:
      return label('Common Shares', '100%', '10,000,000', `${BLUE} ${YELLOW}`, 'text-black');
    case 6:
    case 7: {
      const cells = label(`Preferred Class ${row === 6 ? 'A' : 'B'}`, '0%', '-', `${BLUE} ${YELLOW}`, 'text-black');
      cells.E = { text: 'Fully Diluted Share Value', className: `${WORDS} pl-0.5` };
      if (row === 7) {
        YEAR_COLUMNS.forEach((col: string): void => {
          cells[col] = {
            text: col === 'N' ? 'Distribution Summary - Annual' : '',
            className: `${SMALL_WORDS} ${GRAY} pl-0.5`,
          };
        });
      }
      return cells;
    }
    case 8: {
      const cells = bottomLine();
      YEAR_COLUMNS.forEach((col: string): void => {
        cells[col] = { className: GRAY };
      });
      return cells;
    }
    case 9:
      return headingRow();
    case 10: {
      const cells = bottomLine();
      cells.B = { text: <u className="underline-offset-2">Outside Investors</u>, className: `${WORDS} ${B_DOT} pl-0.5` };
      cells.S = { className: GRAY };
      return cells;
    }
    case 31:
    case 33:
      return totalsRow(row);
    case 32:
      return bottomLine();
    case 34: {
      const cells = bottomLine();
      cells.B = {
        text: (
          <u className="underline-offset-2">
            Founders/Operators/Employ
            <br />
            ees
          </u>
        ),
        className: `${WORDS} ${B_DOT} pl-0.5`,
      };
      cells.S = { text: 'IRR', className: `${SMALL_WORDS} ${GRAY} pr-[3px] text-right font-bold` };
      return cells;
    }
    default:
      return row > 10 ? poolRow(row) : {};
  }
};

const MIDDLE_CELLS: string[] = ['B9', 'M9'];

const leadingFor = (row: number): string =>
  row === 9 || row === 34 ? 'pt-px leading-[18px]' : 'pt-px leading-[17px]';

const Worksheet = (): React.JSX.Element => (
  <div className="flex min-h-0 flex-1">
    <div className="min-w-0 flex-1 overflow-hidden border-b border-[#d0d0d0] bg-white">
      <table className="w-[2535px] table-fixed border-separate border-spacing-0 font-['Lato',sans-serif]">
        <colgroup>
          <col className="w-[26px]" />
          {COLUMNS.map(
            (col: string): React.JSX.Element => (
              <col key={col} className={COLUMN_WIDTHS[col] ?? 'w-[114px]'} />
            )
          )}
        </colgroup>
        <thead className="bg-[#efefef] font-['Open_Sans',sans-serif] text-[12px] text-[#444]">
          <tr className="h-[21px]">
            <th aria-label="Select all" className="border-r border-b border-r-[#c8c8c8] border-b-[#9b9b9b] p-0">
              <Icon w={12} h={12} className="ml-[10px]">
                <path d="M12 0v12H0z" fill="#d8d8d8" stroke="none" />
              </Icon>
            </th>
            {COLUMNS.map(
              (col: string): React.JSX.Element => (
                <th
                  key={col}
                  scope="col"
                  className={`border-r border-b border-b-[#9b9b9b] p-0 pt-0.5 leading-[18px] font-normal ${col === 'B' ? 'border-r-[#9b9b9b]' : 'border-r-[#d4d4d4]'}`}
                >
                  {col}
                </th>
              )
            )}
          </tr>
        </thead>
        <tbody>
          {Array.from({ length: 52 }, (_, i): number => i + 1).map((row: number): React.JSX.Element => {
            const cells: Record<string, Cell> = cellsFor(row);
            return (
              <tr key={row} className={ROW_HEIGHTS[row] ?? 'h-[19px]'}>
                <th
                  scope="row"
                  className="border-r border-b border-r-[#9b9b9b] border-b-[#d4d4d4] bg-[#efefef] p-0 pt-0.5 align-bottom font-['Open_Sans',sans-serif] text-[12px] leading-4 font-normal text-[#444]"
                >
                  {row}
                </th>
                {COLUMNS.map((col: string): React.JSX.Element => {
                  const cell: Cell | undefined = cells[col];
                  const align: string = MIDDLE_CELLS.includes(`${col}${row}`) ? 'align-middle' : 'align-bottom';
                  return (
                    <td
                      key={col}
                      className={`whitespace-nowrap ${leadingFor(row)} ${align} ${col === 'B' ? R_FREEZE : ''} ${cell?.className ?? ''} ${cell?.flag ? 'relative' : ''}`}
                    >
                      {cell?.flag && (
                        <span className="absolute top-0 left-0 border-t-6 border-r-6 border-t-[#107c10] border-r-transparent" />
                      )}
                      {cell?.text}
                    </td>
                  );
                })}
              </tr>
            );
          })}
        </tbody>
      </table>
    </div>
    <div className="flex w-[25px] shrink-0 flex-col items-center rounded-lg border-l border-[#d8d8d8] bg-[#f7f7f7] pt-2 pb-1">
      <Icon w={12} h={10}>
        <path d="M6 1l5 8H1z" fill="#666" stroke="#666" />
      </Icon>
      <div className="mt-1 flex w-[11px] flex-1">
        <div className="h-[82%] w-full rounded-full bg-[#707070]" />
      </div>
      <Icon w={12} h={10}>
        <path d="M6 9l5-8H1z" fill="#666" stroke="#666" />
      </Icon>
    </div>
  </div>
);

/* ---------- sheet tabs and status bar ---------- */

const SHEET_TABS: SheetTab[] = [
  { name: 'Index', width: 'w-16', tone: 'white' },
  { name: 'Global Control', width: 'w-[136px]', tone: 'yellow' },
  { name: 'Executive Summary', width: 'w-[175px]', tone: 'purple' },
  { name: 'Software Development', width: 'w-[202px]', tone: 'yellow' },
  { name: 'Deal Assumptions', width: 'w-[163px]', tone: 'yellow' },
  { name: 'M1', width: 'w-[43px]', tone: 'plain' },
  { name: 'M2', width: 'w-[46px]', tone: 'plain' },
  { name: 'M3', width: 'w-[46px]', tone: 'plain' },
  { name: 'OPEX', width: 'w-[63px]', tone: 'yellow' },
  { name: 'CAPEX', width: 'w-[73px]', tone: 'yellow' },
  { name: 'FTE', width: 'w-[49px]', tone: 'yellow' },
  { name: 'Loan2', width: 'w-[68px]', tone: 'yellow' },
  { name: 'Loan3', width: 'w-[68px]', tone: 'yellow' },
  { name: 'Cap Table', width: 'w-[99px]', tone: 'active' },
  { name: 'Startup Costs', width: 'w-[126px]', tone: 'yellow' },
  { name: 'Terminal Value', width: 'w-[138px]', tone: 'yellow' },
  { name: 'Monthly Detail', width: 'w-[138px]', tone: 'purple' },
  { name: 'Annual Detail', width: 'w-[127px]', tone: 'purple' },
  { name: 'DCF Analysis', width: 'w-[121px]', tone: 'purple' },
];

const TONES: Record<SheetTab['tone'], string> = {
  white: 'h-[30px] rounded-[5px] bg-white pt-px text-black',
  yellow: 'h-[30px] rounded-[5px] bg-[#ffffcc] pt-px text-black',
  purple: 'h-[30px] rounded-[5px] bg-[#7030a0] pt-px text-white',
  plain: 'h-[30px] pt-px text-[#333]',
  active:
    'h-[36px] self-start rounded-b-[5px] bg-linear-to-b from-white to-[#ffffee] pb-0.5 font-semibold text-[#242424] shadow-[0_1px_1px_#bbb]',
};

const SheetTabs = (): React.JSX.Element => (
  <div className="flex h-10 shrink-0 items-center text-[16px]">
    <div className="flex w-[141px] shrink-0 items-center gap-[33px] pl-[32px]">
      <button aria-label="Previous sheet">
        <Icon w={8} h={14}>
          <path d="M7 1 1.500 7 7 13" stroke="#aaa" />
        </Icon>
      </button>
      <button aria-label="Next sheet">
        <Icon w={8} h={14}>
          <path d="M1 1l5.500 6L1 13" stroke="#333" strokeWidth="1.600" />
        </Icon>
      </button>
    </div>
    {SHEET_TABS.map(
      (tab: SheetTab, i: number): React.JSX.Element => (
        <div key={tab.name} className="flex h-full shrink-0 items-center">
          {i > 0 && <span className="mx-[5px] h-6 w-px bg-[#d0d0d0]" />}
          <button className={`whitespace-nowrap ${tab.width} ${TONES[tab.tone]}`}>
            {tab.tone === 'active' ? (
              <span className="mx-[9px] block border-b-2 border-[#107c41] leading-7">{tab.name}</span>
            ) : (
              tab.name
            )}
          </button>
        </div>
      )
    )}
    <div className="flex flex-1 items-center justify-end pr-[25px]">
      <button aria-label="All sheets" className="mr-6">
        <Icon w={16} h={4}>
          <path d="M1 2h3M6.500 2h3M12 2h3" strokeWidth="3" />
        </Icon>
      </button>
      <button aria-label="New sheet" className="mr-8">
        <Icon w={16} h={16}>
          <path d="M8 1v14M1 8h14" strokeWidth="1.700" />
        </Icon>
      </button>
      <Icon w={4} h={14} className="mr-5">
        <path d="M2 .5v2.500M2 5.800v2.500M2 11v2.500" strokeWidth="2.500" />
      </Icon>
      <div className="flex h-[20px] w-[124px] items-center justify-between rounded-full bg-[#f7f7f7] px-1.5">
        <Icon w={8} h={12}>
          <path d="M7 1v10L1 6z" fill="#666" stroke="#666" />
        </Icon>
        <span className="h-[11px] w-20 rounded-full bg-[#707070]" />
        <Icon w={8} h={12}>
          <path d="M1 1v10l6-5z" fill="#666" stroke="#666" />
        </Icon>
      </div>
    </div>
  </div>
);

const StatusBar = (): React.JSX.Element => (
  <footer className="flex h-[27px] shrink-0 items-center border-t border-white bg-[#f3f3f3] text-[12px] text-[#333]">
    <span className="w-[75px] pl-[14px]">Ready</span>
    <button aria-label="Record macro" className="w-10">
      <Icon w={18} h={17}>
        <path d="M7 15H1V1h16v5M1 4.500h16M3.500 7.500h3M3.500 10.500h2" />
        <circle cx="12" cy="11" r="4.800" />
        <circle cx="12" cy="11" r="2" fill="#333" />
      </Icon>
    </button>
    <button className="flex items-center gap-1 font-bold">
      <Icon w={18} h={18}>
        <circle cx="8" cy="3" r="2" />
        <path d="M2 5l4 2v4l-2.500 6M14 5l-4 2v3M6 12l2-1.500M11 11l6 6M17 11l-6 6" strokeWidth="1.600" />
      </Icon>
      Accessibility: Investigate
    </button>
    <div className="flex h-full flex-1 items-center justify-end pr-[15px]">
      <button aria-label="Normal view" className="flex h-full w-[51px] items-center justify-center bg-[#dedede]">
        <Icon w={17} h={17}>
          <path d="M1 1h15v15H1zM1 6h15M1 11h15M6 1v15M11 1v15" stroke="#333" />
        </Icon>
      </button>
      <button aria-label="Page layout view" className="flex w-[50px] justify-center">
        <Icon w={17} h={17}>
          <path d="M1 1h15v15H1zM4 3.500h9v10H4zM6 6h5M6 8.500h5M6 11h5" stroke="#333" />
        </Icon>
      </button>
      <button aria-label="Page break view" className="flex w-[50px] justify-center">
        <Icon w={17} h={17}>
          <path d="M1 1h15v15H1zM6 1v9M11 1v9M1 10h10" stroke="#333" />
        </Icon>
      </button>
      <button aria-label="Zoom out" className="ml-[7px]">
        <Icon w={11} h={11}>
          <path d="M1 5.500h9" strokeWidth="1.500" />
        </Icon>
      </button>
      <span className="relative mx-1.5 flex w-[124px] items-center">
        <input
          type="range"
          aria-label="Zoom"
          min="0"
          max="100"
          defaultValue="40"
          className="h-px w-full appearance-none bg-[#555] [&::-webkit-slider-thumb]:h-[14px] [&::-webkit-slider-thumb]:w-[5px] [&::-webkit-slider-thumb]:appearance-none [&::-webkit-slider-thumb]:bg-[#555]"
        />
        <span className="absolute left-1/2 h-[7px] w-px bg-[#555]" />
      </span>
      <button aria-label="Zoom in">
        <Icon w={11} h={11}>
          <path d="M1 5.500h9M5.500 1v9" strokeWidth="1.300" />
        </Icon>
      </button>
      <button className="ml-4 w-[26px] text-[12px] whitespace-nowrap">80%</button>
    </div>
  </footer>
);

/* ---------- taskbar ---------- */

interface AppIcon {
  name: string;
  running: boolean;
  icon: ReactNode;
}

const APPS: AppIcon[] = [
  {
    name: 'Task view',
    running: false,
    icon: (
      <svg width="30" height="30" viewBox="0 0 30 30">
        <rect x="0" y="9" width="22" height="20" rx="1" fill="#2b2b2b" />
        <rect x="7" y="1" width="22" height="19" rx="1" fill="#e9e9e9" fillOpacity=".85" stroke="#fff" />
        <path d="M7 9h15v11H7z" fill="#b9b9b9" />
      </svg>
    ),
  },
  {
    name: 'File Explorer',
    running: true,
    icon: (
      <svg width="30" height="30" viewBox="0 0 30 30">
        <path d="M0 3a1 1 0 0 1 1-1h9l3 3v6H0z" fill="#e0a000" />
        <rect x="0" y="5" width="30" height="23" rx="1" fill="#ffcf45" />
        <path d="M5 28v-5a2 2 0 0 1 2-2h16a2 2 0 0 1 2 2v5z" fill="#0f78d4" />
        <path d="M8.500 25h13" stroke="#0a4c90" strokeWidth="1.500" />
      </svg>
    ),
  },
  {
    name: 'Opera',
    running: true,
    icon: (
      <svg width="30" height="30" viewBox="0 0 30 30">
        <circle cx="15" cy="15" r="14.500" fill="#e8152b" />
        <path d="M15 .5a14.500 14.500 0 0 1 0 29c6-1 9-8 9-14.500S21 2 15 .5z" fill="#b00d1e" />
        <path d="M24 26.500A14.500 14.500 0 0 0 24 3.500c5 7 5 16 0 23z" fill="#ff5555" />
        <ellipse cx="15" cy="15" rx="6.800" ry="11.500" fill="#d5e6f3" />
      </svg>
    ),
  },
  {
    name: 'Chrome',
    running: true,
    icon: (
      <svg width="30" height="30" viewBox="0 0 30 30" className="overflow-visible">
        <circle cx="15" cy="15" r="14.500" fill="#fbbc05" />
        <path d="M15 15 2.500 7.700A14.500 14.500 0 0 0 15 29.500l6-8z" fill="#2c9f4b" />
        <path d="M15 15 2.500 7.700A14.500 14.500 0 0 1 27.500 7.700H15z" fill="#e33b2e" />
        <circle cx="15" cy="15" r="7.500" fill="#fff" />
        <circle cx="15" cy="15" r="6" fill="#2f7de9" />
        <circle cx="26" cy="4" r="9.500" fill="#b9b9b9" stroke="#9a9a9a" />
        <path d="M17 3.500h18" stroke="#8f8f8f" />
      </svg>
    ),
  },
  {
    name: 'Snipping Tool',
    running: false,
    icon: (
      <svg width="30" height="30" viewBox="0 0 30 30">
        <rect x="0" y="0" width="22" height="22" rx="2" fill="#f3f3f3" />
        <path d="M4.500 16V4.500H16" stroke="#d83b01" strokeWidth="3" strokeDasharray="3 2" fill="none" />
        <path d="M6 18h17M17 6v17" stroke="#8b949c" strokeWidth="2.500" />
        <circle cx="26.500" cy="16" r="2.500" stroke="#1ba1e8" strokeWidth="2" fill="none" />
        <circle cx="16" cy="27" r="2.500" stroke="#1ba1e8" strokeWidth="2" fill="none" />
      </svg>
    ),
  },
  {
    name: 'Notepad',
    running: true,
    icon: (
      <svg width="24" height="30" viewBox="0 0 24 30">
        <rect x="1" y="2" width="22" height="25" rx="1.500" fill="#4fc3e8" />
        <path d="M1 26h22v1.500H1z" fill="#fff" />
        <path d="M1 27.500h22V29a1 1 0 0 1-1 1H2a1 1 0 0 1-1-1z" fill="#a0480c" />
        <path d="M5 10h14M5 15h14M5 20h14" stroke="#0b5c80" strokeWidth="2" />
        <path d="M4 .5V4M9 .5V4M14.500 .5V4M20 .5V4" stroke="#0b5c80" strokeWidth="3" />
      </svg>
    ),
  },
  { name: 'Excel', running: true, icon: <ExcelLogo size={30} /> },
];

const Taskbar = (): React.JSX.Element => (
  <div className="flex h-[60px] shrink-0 items-center border-t border-[#a9b8c8] bg-[#d1e5f4] text-[14px] text-[#1f1f1f]">
    <button className="flex w-[931px] items-center gap-2 pb-[3px] pl-[27px] text-left leading-[19px] text-[#4c5863]">
      <span className="relative">
        <Icon w={29} h={34}>
          <rect x="4" y="4" width="10" height="26" rx="5" fill="#bcd8f5" stroke="#6f98c8" />
          <path d="M9 10v14" stroke="#e0406a" strokeWidth="3" />
          <circle cx="9" cy="25" r="5" fill="#1f8ae8" stroke="none" />
          <path d="M20 14v15M17 24l3 5 3-5" stroke="#2a5be0" strokeWidth="2" />
        </Icon>
        <span className="absolute -top-1 left-3 flex h-[19px] w-[19px] items-center justify-center rounded-full bg-[#c42b1c] text-[12px] text-white">
          1
        </span>
      </span>
      <span>
        Partly sunny
        <br />
        Cooler temps ex...
      </span>
    </button>
    <button aria-label="Start">
      <svg width="30" height="30" viewBox="0 0 30 30">
        <defs>
          <linearGradient id="win" x1="0" y1="0" x2="1" y2="1">
            <stop offset="0" stopColor="#4cc8f8" />
            <stop offset="1" stopColor="#0570d0" />
          </linearGradient>
        </defs>
        <path d="M1 0h13v14H0V1zM16 0h13l1 1v13H16zM0 16h14v14H1l-1-1zM16 16h14v13l-1 1H16z" fill="url(#win)" />
      </svg>
    </button>
    <label className="ml-[17px] flex h-[38px] w-[273px] items-center gap-[10px] rounded-full border border-[#b8cbdc] bg-[#f2f8fd] pr-[10px] pl-[13px]">
      <Icon w={19} h={20}>
        <circle cx="10" cy="8.500" r="6.800" stroke="#222" strokeWidth="2" />
        <path d="M14.500 14l3.500 4.500" stroke="#222" strokeWidth="2" />
      </Icon>
      <input
        aria-label="Search the web"
        placeholder="Search"
        className="min-w-0 flex-1 bg-transparent text-[15px] outline-none placeholder:text-[#666]"
      />
      <Icon w={54} h={32}>
        <path d="M4 3 33 17l-3 7L1 10z" fill="#1f8f98" stroke="#0d7a80" />
        <path d="M4 8l26 12" stroke="#8fd3d6" strokeWidth="1.500" />
        <path d="M1 12l31 7-2 10L0 21z" fill="#e6eef0" stroke="#8fa9ae" />
        <path d="M3 15l26 6" stroke="#1f8f98" strokeWidth="2" />
        <path d="M4 19.500l22 5.500" stroke="#9a5a48" strokeDasharray="3 2" strokeWidth="2.500" />
        <rect x="36" y="7" width="16" height="22" rx="2.500" fill="#63c9b5" stroke="#2f9f8d" />
        <path d="M40 9v18M44 9v18M48 9v18" stroke="#2f9f8d" />
        <path d="M41 7V1.500h6V7" stroke="#4a4a70" strokeWidth="1.500" />
        <path d="M39 29v2M49 29v2" stroke="#444" strokeWidth="2" />
      </Icon>
    </label>
    <div className="ml-1 flex flex-1">
      {APPS.map(
        (app: AppIcon): React.JSX.Element => (
          <button key={app.name} aria-label={app.name} className="flex w-[55px] flex-col items-center pt-1">
            <span className="flex h-9 items-center justify-center">{app.icon}</span>
            <span className={`mt-[3px] h-1 w-2 rounded-full ${app.running ? 'bg-[#76828d]' : 'bg-transparent'}`} />
          </button>
        )
      )}
    </div>
    <button aria-label="Show hidden icons">
      <Icon w={14} h={9}>
        <path d="M1.500 8 7 2l5.500 6" stroke="#222" strokeWidth="1.700" />
      </Icon>
    </button>
    <button aria-label="Network and volume" className="mx-[22px] flex items-center gap-[9px]">
      <Icon w={22} h={22}>
        <path d="M13 3H2v13h16v-5M10 16v4M5 20.500h10M16 1.500h4.500v5H16zM18.200 7v4" stroke="#222" strokeWidth="1.500" />
      </Icon>
      <Icon w={22} h={18}>
        <path d="M1 6.500v5h3.500L9 16V2L4.500 6.500zM11.500 6c1.500 2 1.500 4 0 6" stroke="#222" strokeWidth="1.400" />
        <path d="M14.500 4c3 3 3 7 0 10" stroke="#999" />
      </Icon>
    </button>
    <button className="pr-[24px] pb-[3px] text-right leading-[19px]">
      8:18 AM
      <br />
      5/17/2025
    </button>
  </div>
);

const App = (): React.JSX.Element => (
  <div className="flex h-screen flex-col overflow-hidden bg-[#efefef] font-['Open_Sans',sans-serif]">
    <TitleBar />
    <RibbonTabs />
    <Ribbon />
    <FormulaBar />
    <Worksheet />
    <SheetTabs />
    <StatusBar />
    <Taskbar />
  </div>
);

export default App;
